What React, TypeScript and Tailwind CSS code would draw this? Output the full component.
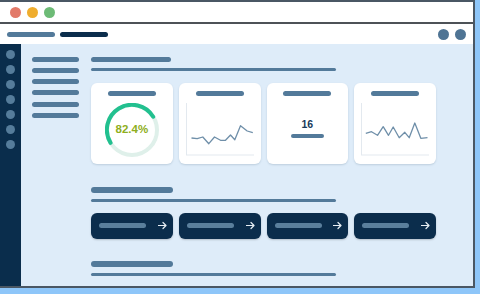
import React from "react";

const BAR = "bg-[#537a9a]";

function Chart({ points }: { points: string }) {
  return (
    <svg width="68" height="54" viewBox="0 0 68 54" className="mt-[5.7px]">
      <line x1="0.5" y1="1" x2="0.5" y2="53" stroke="#e3e9ef" strokeWidth="1" />
      <line x1="0" y1="53" x2="68" y2="53" stroke="#e3e9ef" strokeWidth="1" />
      <polyline points={points} fill="none" stroke="#6f8fa9" strokeWidth="1.3" strokeLinejoin="round" />
    </svg>
  );
}

function Card({ children }: { children: React.ReactNode }) {
  return (
    <div className="h-[81px] bg-white rounded-[6px] shadow-[0_1px_2px_rgba(40,70,100,0.18)] flex flex-col items-center pt-[7.5px]">
      <div className={`w-[48px] h-[5.5px] rounded-full ${BAR}`} />
      {children}
    </div>
  );
}

function Arrow() {
  return (
    <svg width="9" height="9" viewBox="0 0 9 9">
      <path d="M0.5 4.5H8M5 1.5L8 4.5L5 7.5" fill="none" stroke="#e6edf3" strokeWidth="1.2" strokeLinecap="round" strokeLinejoin="round" />
    </svg>
  );
}

function Button() {
  return (
    <div className="h-[26px] bg-[#0b2d4c] rounded-[6px] flex items-center justify-between pl-[8px] pr-[6px] shadow-[0_1px_2px_rgba(0,0,0,0.2)]">
      <div className="w-[47px] h-[5px] rounded-full bg-[#5a7f9c]" />
      <Arrow />
    </div>
  );
}

function SectionHead() {
  return (
    <>
      <div className={`w-[82px] h-[5.5px] rounded-full ${BAR}`} />
      <div className={`w-[245px] h-[3.5px] rounded-full ${BAR} mt-[6px]`} />
    </>
  );
}

export default function App() {
  const chart1 =
    "5.5,36 11.2,36.7 16.8,35 22.8,41.7 28.5,35 34.5,38.3 39.5,38.3 44.5,33 48.8,37.7 54.5,23.7 61.2,29 66.8,30.7";
  const chart2 =
    "4.8,31.3 10.5,29.7 16.5,33.3 22.2,24.7 27.5,33.3 32.2,25 38.2,35.7 43.8,30.3 48.2,35.7 53.8,21 59.8,36.3 66.5,35.7";
  return (
    <div className="w-[480px] h-[294px] bg-[#8ec6f9] overflow-hidden" style={{ fontFamily: '"Liberation Sans", Arial, sans-serif' }}>
      <div className="w-[475px] h-[288px] border-t-2 border-r-2 border-b-2 border-[#4a5764] bg-white flex flex-col">
        {/* title bar */}
        <div className="h-[20px] flex items-center gap-[6px] pl-[10px] border-b-2 border-[#4d5257] box-content">
          <div className="w-[11px] h-[11px] rounded-full bg-[#e27a69]" />
          <div className="w-[11px] h-[11px] rounded-full bg-[#efad2e]" />
          <div className="w-[11px] h-[11px] rounded-full bg-[#6dbb76]" />
        </div>
        {/* toolbar */}
        <div className="h-[20px] flex items-center px-[7px]">
          <div className={`w-[48px] h-[5px] rounded-full ${BAR}`} />
          <div className="w-[48px] h-[5px] rounded-full bg-[#0b2d4c] ml-[5px]" />
          <div className="flex-1" />
          <div className="w-[11px] h-[11px] rounded-full bg-[#4f7494]" />
          <div className="w-[11px] h-[11px] rounded-full bg-[#4f7494] ml-[6px]" />
        </div>
        {/* main */}
        <div className="flex-1 flex bg-[#deecf9]">
          <div className="w-[21px] bg-[#0a2d4c] flex flex-col items-center pt-[6px] gap-[6px]">
            {[0, 1, 2, 3, 4, 5, 6].map((i) => (
              <div key={i} className="w-[9px] h-[9px] rounded-full bg-[#557c9b]" />
            ))}
          </div>
          <div className="w-[47px] ml-[11px] pt-[12.5px] flex flex-col gap-[6.3px]">
            {[0, 1, 2, 3, 4, 5].map((i) => (
              <div key={i} className={`h-[5px] rounded-full ${BAR}`} />
            ))}
          </div>
          <div className="w-[345px] ml-[12px] pt-[12.7px] flex flex-col">
            <div className={`w-[80px] h-[5px] rounded-full ${BAR}`} />
            <div className={`w-[245px] h-[3.5px] rounded-full ${BAR} mt-[6px]`} />
            <div className="grid grid-cols-4 gap-[6px] mt-[12px]">
              <Card>
                <div className="relative mt-[6.7px] w-[54px] h-[54px]">
                  <svg width="54" height="54" viewBox="0 0 54 54">
                    <circle cx="27" cy="27" r="25" fill="none" stroke="#dff0ea" strokeWidth="4" />
                    <path d="M48.2 13.75 A25 25 0 0 0 5.57 39.88" fill="none" stroke="#22c08f" strokeWidth="4" strokeLinecap="round" />
                  </svg>
                  <div className="absolute inset-0 flex items-center justify-center text-[11.5px] font-bold text-[#8eae20] leading-none">
                    82.4%
                  </div>
                </div>
              </Card>
              <Card>
                <Chart points={chart1} />
              </Card>
              <Card>
                <div className="mt-[22px] text-[10.5px] leading-[12px] font-bold text-[#173a5a]">16</div>
                <div className={`w-[33px] h-[3.5px] rounded-full ${BAR} mt-[4px]`} />
              </Card>
              <Card>
                <Chart points={chart2} />
              </Card>
            </div>
            <div className="mt-[23px]">
              <SectionHead />
            </div>
            <div className="grid grid-cols-4 gap-[6px] mt-[10.6px]">
              <Button />
              <Button />
              <Button />
              <Button />
            </div>
            <div className="mt-[22.7px]">
              <SectionHead />
            </div>
          </div>
        </div>
      </div>
    </div>
  );
}
